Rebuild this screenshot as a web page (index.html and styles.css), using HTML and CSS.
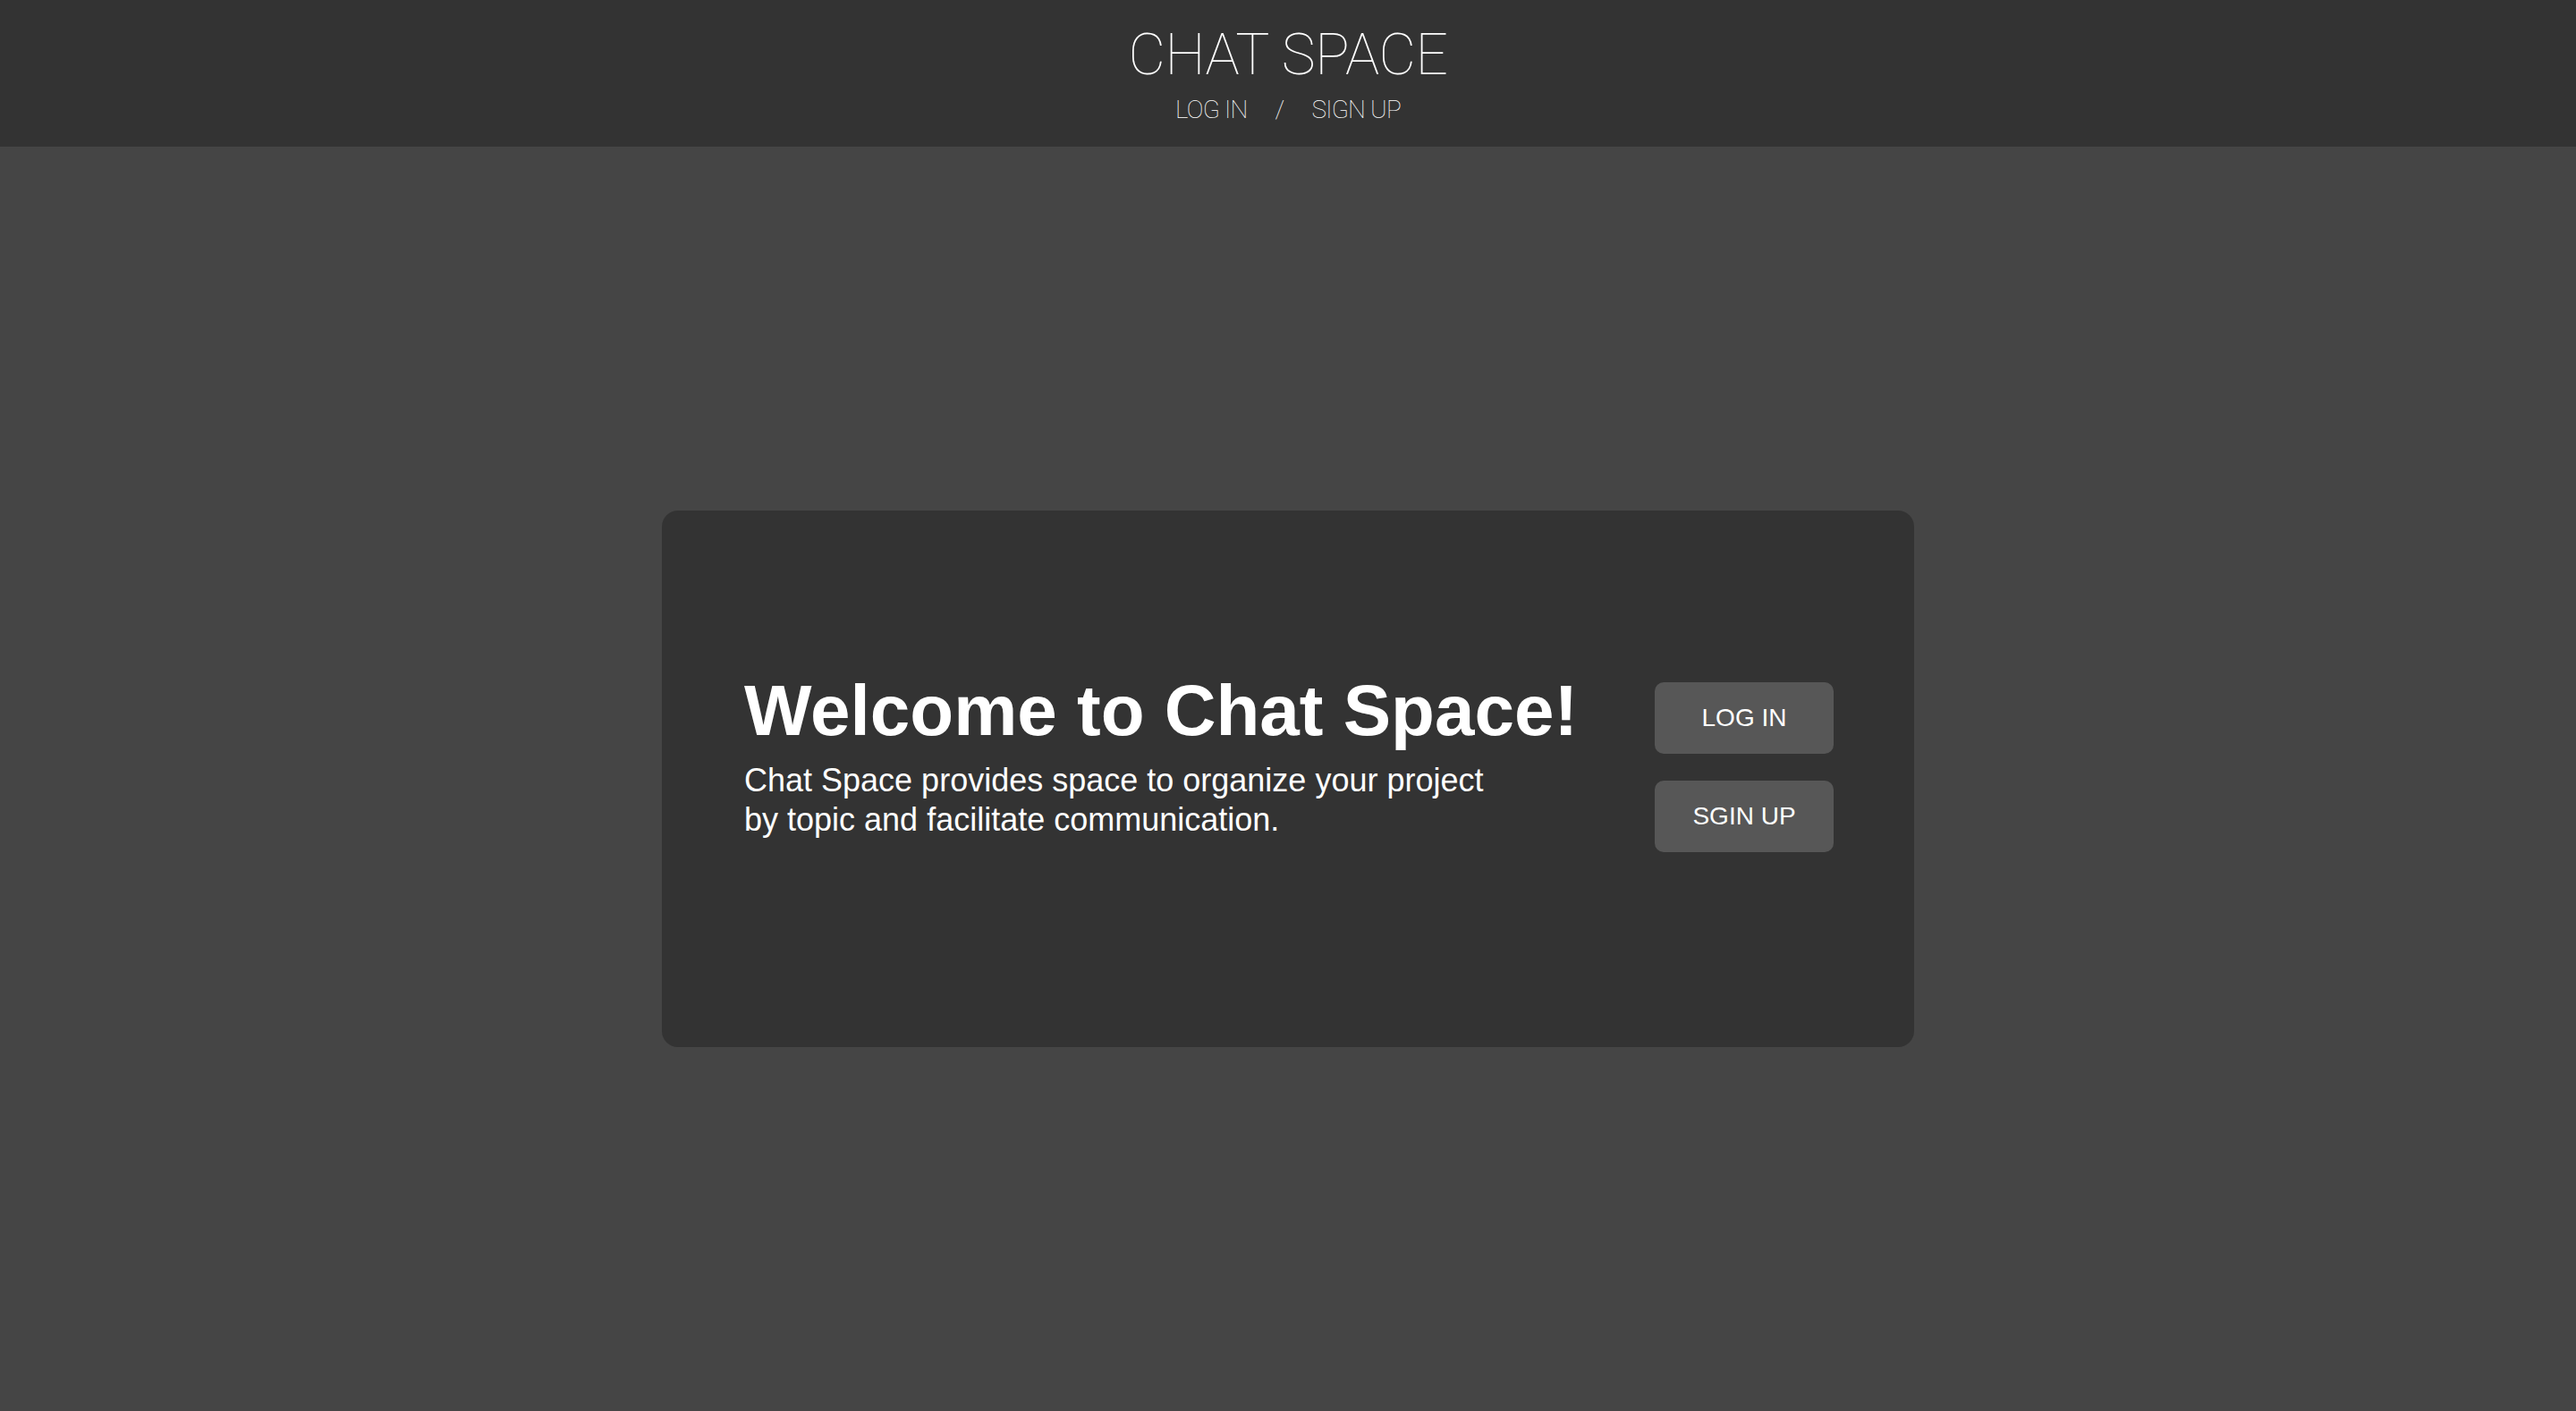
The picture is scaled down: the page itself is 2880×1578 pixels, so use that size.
FILE: index.html
```html
<!DOCTYPE html>
<html lang="en">
<head>
<meta charset="utf-8">
<title>Chat Space</title>
<link rel="stylesheet" href="styles.css">
</head>
<body>
<header class="site-header">
  <h1 class="site-title">CHAT SPACE</h1>
  <nav class="site-nav">
    <a class="nav-link" href="#">LOG IN</a>
    <span class="nav-sep">/</span>
    <a class="nav-link" href="#">SIGN UP</a>
  </nav>
</header>
<main class="main">
  <section class="card">
    <div class="card-text">
      <h2 class="card-title">Welcome to Chat Space!</h2>
      <p class="card-desc">Chat Space provides space to organize your project by topic and facilitate communication.</p>
    </div>
    <div class="card-actions">
      <a class="btn" href="#">LOG IN</a>
      <a class="btn" href="#">SGIN UP</a>
    </div>
  </section>
</main>
</body>
</html>
```
FILE: styles.css
```css
html, body {
  margin: 0;
  padding: 0;
}
body {
  min-height: 100vh;
  display: flex;
  flex-direction: column;
  background: #454545;
  color: #ffffff;
  font-family: "Liberation Sans", Arial, sans-serif;
}
.site-header {
  height: 164px;
  flex: 0 0 164px;
  background: #333333;
  display: flex;
  flex-direction: column;
  align-items: center;
  box-sizing: border-box;
  padding-top: 26px;
}
.site-title {
  margin: 0;
  font-family: "Roboto", "Liberation Sans", sans-serif;
  font-weight: 100;
  font-size: 64px;
  line-height: 72px;
  letter-spacing: -0.4px;
  color: #ffffff;
}
.site-nav {
  display: flex;
  align-items: baseline;
  gap: 31px;
  margin-top: 7px;
  font-family: "Roboto", "Liberation Sans", sans-serif;
  font-weight: 100;
  font-size: 28px;
  line-height: 36px;
  letter-spacing: -0.8px;
}
.nav-link {
  color: #ffffff;
  text-decoration: none;
}
.nav-sep {
  color: #ffffff;
}
.main {
  flex: 1;
  display: flex;
  align-items: center;
  justify-content: center;
}
.card {
  width: 1400px;
  height: 600px;
  box-sizing: border-box;
  background: #333333;
  border-radius: 18px;
  padding: 0 90px 27px 92px;
  display: flex;
  align-items: center;
  justify-content: space-between;
}
.card-text {
  margin-bottom: 26px;
}
.card-title {
  margin: 0;
  font-size: 80px;
  line-height: 90px;
  font-weight: 700;
  letter-spacing: 0;
}
.card-desc {
  margin: 11px 0 0;
  font-size: 36px;
  line-height: 44px;
  max-width: 850px;
}
.card-actions {
  display: flex;
  flex-direction: column;
  gap: 30px;
}
.btn {
  width: 200px;
  height: 80px;
  border-radius: 10px;
  background: #575757;
  color: #ffffff;
  text-decoration: none;
  display: flex;
  align-items: center;
  justify-content: center;
  font-size: 28px;
}
```
